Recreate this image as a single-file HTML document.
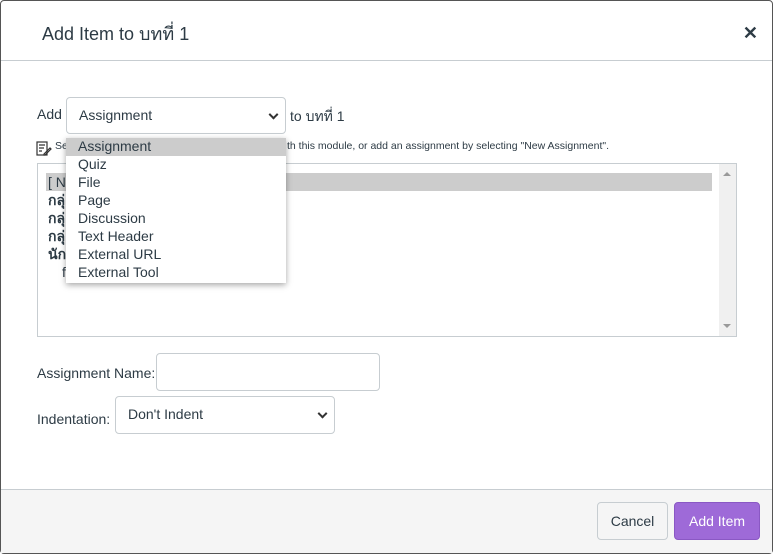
<!DOCTYPE html>
<html><head><meta charset="utf-8"><style>
*{box-sizing:border-box;margin:0;padding:0}
body{width:773px;height:554px;background:#fff;font-family:"Liberation Sans","Noto Sans CJK SC",sans-serif;color:#2d3b45;position:relative;overflow:hidden}
.frame{position:absolute;left:0;top:0;width:773px;height:554px;border:1px solid #555;border-radius:4px}
.hdr{position:absolute;left:1px;top:1px;right:1px;height:60px;border-bottom:1px solid #c7cdd1}
.title{position:absolute;left:41px;top:18px;font-size:18px;color:#2d3b45}
.x{position:absolute;right:14px;top:22px;font-size:18px;font-weight:bold}
.abs{position:absolute}
.sel{border:1px solid #c7cdd1;border-radius:4px;background:#fff;font-size:14px;padding-left:12px}
.chev{position:absolute;right:8px;top:50%;width:7px;height:7px;border-right:2px solid #333;border-bottom:2px solid #333;transform:translateY(-70%) rotate(45deg)}
.list{left:37px;top:163px;width:700px;height:174px;border:1px solid #c7cdd1;font-size:14px}
.dd{left:66px;top:138px;width:220px;height:145px;background:#fff;box-shadow:0 2px 6px rgba(0,0,0,.35);font-size:14px;color:#2d3b45}
.dd div{height:18px;line-height:17px;padding-left:12px}
.foot{position:absolute;left:1px;right:1px;bottom:1px;top:489px;background:#f5f5f5;border-top:1px solid #c7cdd1}
.btn{position:absolute;top:502px;height:38px;border-radius:4px;font-size:14px;line-height:36px;text-align:center}
</style></head><body>
<div class="frame"></div>
<div class="hdr"><div class="title">Add Item to บทที่ 1</div><div class="x">✕</div></div>
<div class="abs" style="left:37px;top:106px;font-size:14px">Add</div>
<div class="abs sel" style="left:66px;top:97px;width:220px;height:37px;line-height:35px">Assignment<span class="chev"></span></div>
<div class="abs" style="left:290px;top:106px;font-size:14px">to บทที่ 1</div>
<svg class="abs" style="left:36px;top:141px" width="16" height="16" viewBox="0 0 16 16" fill="none" stroke="#333" stroke-width="1.2"><rect x="1" y="1" width="10" height="13"/><path d="M3 4h6M3 7h5M3 10h3M8 13l6-6 1 1-6 6h-1z"/></svg>
<div class="abs" style="left:55px;top:140px;font-size:10.5px">Se</div>
<div class="abs" style="left:287px;top:140px;font-size:10.5px">th this module, or add an assignment by selecting "New Assignment".</div>
<div class="abs list">
<div class="abs" style="left:8px;top:9px;width:666px;height:18px;background:#ccc"></div>
<div class="abs" style="left:10px;top:9px;line-height:18px">[ N</div>
<div class="abs" style="left:10px;top:27px;line-height:18px;font-weight:bold">กลุ่</div>
<div class="abs" style="left:10px;top:45px;line-height:18px;font-weight:bold">กลุ่</div>
<div class="abs" style="left:10px;top:63px;line-height:18px;font-weight:bold">กลุ่</div>
<div class="abs" style="left:10px;top:81px;line-height:18px;font-weight:bold">นัก</div>
<div class="abs" style="left:24px;top:99px;line-height:18px">f...</div>
<div class="abs" style="right:0;top:0;width:17px;height:172px;background:#f0f0f0"></div>
<div class="abs" style="right:5px;top:8px;border:4px solid transparent;border-bottom:4px solid #999;border-top:0"></div>
<div class="abs" style="right:5px;bottom:8px;border:4px solid transparent;border-top:4px solid #999;border-bottom:0"></div>
</div>
<div class="abs dd">
<div style="background:#ccc">Assignment</div><div>Quiz</div><div>File</div><div>Page</div><div>Discussion</div><div>Text Header</div><div>External URL</div><div>External Tool</div>
</div>
<div class="abs" style="left:37px;top:365px;font-size:14px">Assignment Name:</div>
<div class="abs" style="left:156px;top:353px;width:224px;height:38px;border:1px solid #c7cdd1;border-radius:4px"></div>
<div class="abs" style="left:37px;top:411px;font-size:14px">Indentation:</div>
<div class="abs sel" style="left:115px;top:396px;width:220px;height:38px;line-height:35px">Don't Indent<span class="chev"></span></div>
<div class="foot"></div>
<div class="btn" style="left:597px;width:71px;background:#f5f5f5;border:1px solid #c7cdd1;color:#2d3b45">Cancel</div>
<div class="btn" style="left:674px;width:86px;background:#9e6ad8;color:#fff;border:1px solid #8a58c4">Add Item</div>
</body></html>
